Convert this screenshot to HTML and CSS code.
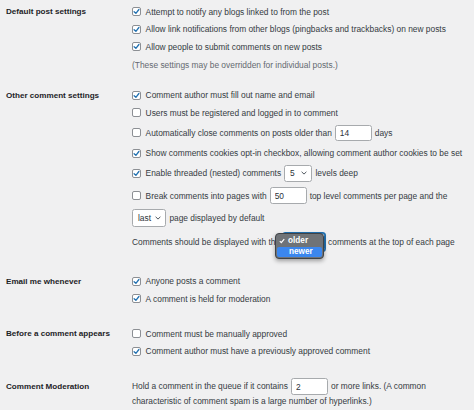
FILE: index.html
```html
<!DOCTYPE html>
<html lang="en">
<head>
<meta charset="utf-8">
<title>Discussion Settings</title>
<link rel="stylesheet" href="styles.css">
</head>
<body>
<div class="page">

  <section class="sec">
    <div class="th">Default post settings</div>
    <div class="td">
      <div class="row"><span class="cb on"><svg viewBox="0 0 7 7"><path d="M1.1 3.7 L2.9 5.3 L5.9 1.5"/></svg></span>Attempt to notify any blogs linked to from the post</div>
      <div class="row"><span class="cb on"><svg viewBox="0 0 7 7"><path d="M1.1 3.7 L2.9 5.3 L5.9 1.5"/></svg></span>Allow link notifications from other blogs (pingbacks and trackbacks) on new posts</div>
      <div class="row"><span class="cb on"><svg viewBox="0 0 7 7"><path d="M1.1 3.7 L2.9 5.3 L5.9 1.5"/></svg></span>Allow people to submit comments on new posts</div>
      <div class="row note">(These settings may be overridden for individual posts.)</div>
    </div>
  </section>

  <section class="sec sec-2">
    <div class="th">Other comment settings</div>
    <div class="td">
      <div class="row"><span class="cb on"><svg viewBox="0 0 7 7"><path d="M1.1 3.7 L2.9 5.3 L5.9 1.5"/></svg></span>Comment author must fill out name and email</div>
      <div class="row"><span class="cb"></span>Users must be registered and logged in to comment</div>
      <div class="row tall"><span class="cb"></span>Automatically close comments on posts older than<input class="num" type="text" value="14">days</div>
      <div class="row mid"><span class="cb on"><svg viewBox="0 0 7 7"><path d="M1.1 3.7 L2.9 5.3 L5.9 1.5"/></svg></span>Show comments cookies opt-in checkbox, allowing comment author cookies to be set</div>
      <div class="row tall"><span class="cb on"><svg viewBox="0 0 7 7"><path d="M1.1 3.7 L2.9 5.3 L5.9 1.5"/></svg></span>Enable threaded (nested) comments<span class="sel sel-5">5<svg class="chev" viewBox="0 0 6 4"><path d="M0.6 0.8 L3 3.1 L5.4 0.8"/></svg></span>levels deep</div>
      <div class="row tall"><span class="cb"></span>Break comments into pages with<input class="num" type="text" value="50">top level comments per page and the</div>
      <div class="row tall"><span class="sel sel-last">last<svg class="chev" viewBox="0 0 6 4"><path d="M0.6 0.8 L3 3.1 L5.4 0.8"/></svg></span>page displayed by default</div>
      <div class="row wide">Comments should be displayed with the<span class="selwrap"><span class="sel sel-order focus">older<svg class="chev" viewBox="0 0 6 4"><path d="M0.6 0.8 L3 3.1 L5.4 0.8"/></svg></span><span class="popup"><span class="opt cur"><svg class="tick" viewBox="0 0 6 6"><path d="M0.8 3.2 L2.3 4.7 L5.2 1.2"/></svg>older</span><span class="opt hl">newer</span></span></span>comments at the top of each page</div>
    </div>
  </section>

  <section class="sec">
    <div class="th">Email me whenever</div>
    <div class="td">
      <div class="row"><span class="cb on"><svg viewBox="0 0 7 7"><path d="M1.1 3.7 L2.9 5.3 L5.9 1.5"/></svg></span>Anyone posts a comment</div>
      <div class="row"><span class="cb on"><svg viewBox="0 0 7 7"><path d="M1.1 3.7 L2.9 5.3 L5.9 1.5"/></svg></span>A comment is held for moderation</div>
    </div>
  </section>

  <section class="sec">
    <div class="th">Before a comment appears</div>
    <div class="td">
      <div class="row"><span class="cb"></span>Comment must be manually approved</div>
      <div class="row"><span class="cb on"><svg viewBox="0 0 7 7"><path d="M1.1 3.7 L2.9 5.3 L5.9 1.5"/></svg></span>Comment author must have a previously approved comment</div>
    </div>
  </section>

  <section class="sec">
    <div class="th">Comment Moderation</div>
    <div class="td">
      <p class="mod">Hold a comment in the queue if it contains<input class="num num-inline" type="text" value="2">or more links. (A common characteristic of comment spam is a large number of hyperlinks.)</p>
    </div>
  </section>

</div>
</body>
</html>
```

FILE: styles.css
```css
html, body {
  margin: 0;
  padding: 0;
}

body {
  background: #f0f0f1;
  font-family: "Liberation Sans", Arial, sans-serif;
  font-size: 8.4px;
  color: #353b42;
  overflow: hidden;
}

.page {
  padding: 3px 6px 0 6px;
}

.sec {
  display: flex;
  margin-top: 17.4px;
}

.sec:first-child {
  margin-top: 0;
}

.sec-2 {
  margin-top: 13.1px;
}

.th {
  width: 126px;
  flex: none;
  height: 17.6px;
  display: flex;
  align-items: center;
  font-weight: bold;
  font-size: 8.1px;
  color: #1d2327;
}

.td {
  flex: 1;
  min-width: 0;
}

.row {
  display: flex;
  align-items: center;
  height: 17.6px;
  white-space: nowrap;
}

.row.tall { height: 22.4px; }
.row.mid { height: 18px; }
.row.wide { height: 25.6px; }

.note {
  color: #646970;
}

.cb {
  width: 9px;
  height: 9px;
  box-sizing: border-box;
  flex: none;
  border: 1px solid #8c8f94;
  border-radius: 2px;
  background: #fff;
  margin-right: 4.6px;
  display: flex;
  align-items: center;
  justify-content: center;
}

.cb svg {
  width: 7px;
  height: 7px;
  display: block;
}

.cb svg path {
  fill: none;
  stroke: #2271b1;
  stroke-width: 1.3;
  stroke-linecap: round;
  stroke-linejoin: round;
}

.num {
  width: 37px;
  height: 16.6px;
  box-sizing: border-box;
  border: 1px solid #a7aaad;
  border-radius: 2.5px;
  background: #fff;
  padding: 0 4px;
  margin: 0 3px;
  font: inherit;
  color: #2c3338;
  outline: none;
}

.num-inline {
  vertical-align: middle;
  margin: -1.2px 3px;
  height: 16.8px;
}

.sel {
  display: inline-flex;
  align-items: center;
  justify-content: space-between;
  height: 17.4px;
  box-sizing: border-box;
  border: 1px solid #a7aaad;
  border-radius: 2.5px;
  background: #fff;
  padding: 0 4px 0 5px;
  margin: 0 3px;
  color: #2c3338;
  flex: none;
}

.sel-5 { width: 28.4px; }

.sel-last {
  width: 34.4px;
  margin-left: 0;
}

.sel-order { width: 42px; }

.sel.focus {
  border-color: #2271b1;
  box-shadow: 0 0 0 1px #2271b1;
}

.chev {
  width: 6px;
  height: 4px;
  display: block;
}

.chev path {
  fill: none;
  stroke: #50575e;
  stroke-width: 1;
}

.selwrap {
  position: relative;
  display: inline-flex;
  align-items: center;
}

.popup {
  position: absolute;
  left: -5px;
  top: 0px;
  width: 48.5px;
  box-sizing: border-box;
  border: 1px solid #3f4347;
  border-radius: 4px;
  background: #6f7377;
  padding: 0 1px 1px;
  box-shadow: 0 2px 4px rgba(0, 0, 0, 0.35);
  font-weight: bold;
  font-size: 8.2px;
  color: #fff;
  display: flex;
  flex-direction: column;
}

.opt {
  display: flex;
  align-items: center;
  height: 12.6px;
  padding-left: 11px;
}

.opt.cur {
  padding-left: 2px;
}

.tick {
  width: 6px;
  height: 6px;
  margin-right: 3px;
  display: block;
}

.tick path {
  fill: none;
  stroke: #fff;
  stroke-width: 1.2;
}

.opt.hl {
  height: 10px;
  background: #3b87ee;
  border-radius: 2px;
  padding-left: 12px;
}

.mod {
  margin: 0;
  padding-top: 1.6px;
  line-height: 14.6px;
}
```
